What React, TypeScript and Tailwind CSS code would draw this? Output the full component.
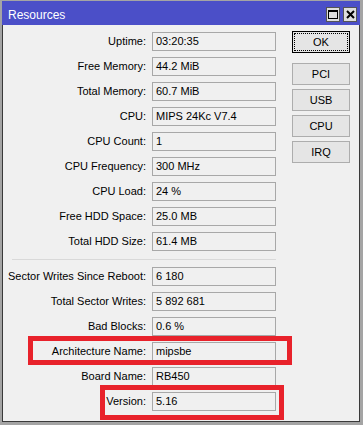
import React from 'react';

const font = { fontFamily: '"Liberation Sans", Arial, sans-serif' };

const GROUP_A: [string, string][] = [
  ['Uptime:', '03:20:35'],
  ['Free Memory:', '44.2 MiB'],
  ['Total Memory:', '60.7 MiB'],
  ['CPU:', 'MIPS 24Kc V7.4'],
  ['CPU Count:', '1'],
  ['CPU Frequency:', '300 MHz'],
  ['CPU Load:', '24 %'],
  ['Free HDD Space:', '25.0 MB'],
  ['Total HDD Size:', '61.4 MB'],
];

const GROUP_B: [string, string][] = [
  ['Sector Writes Since Reboot:', '6 180'],
  ['Total Sector Writes:', '5 892 681'],
  ['Bad Blocks:', '0.6 %'],
  ['Architecture Name:', 'mipsbe'],
  ['Board Name:', 'RB450'],
  ['Version:', '5.16'],
];

const Row: React.FC<{ label: string; value: string }> = ({ label, value }) => (
  <div className="flex h-[19px] items-center gap-[6px]">
    <span className="w-[143px] text-right text-[11px] leading-none text-black">{label}</span>
    <div className="flex h-[19px] w-[124px] items-center border border-[#a8a8a8] px-[3px] text-[11px] leading-none text-black">
      {value}
    </div>
  </div>
);

const SideButton: React.FC<{ label: string }> = ({ label }) => (
  <button className="flex h-[22px] w-[58px] items-center justify-center border border-[#adadad] bg-[#e5e5e5] text-[11px] leading-none text-black">
    {label}
  </button>
);

export default function App() {
  return (
    <div
      className="relative flex h-[425px] w-[363px] flex-col bg-[#a4a4a4] pt-[1px] pr-[3px] pb-[3px] pl-[2px]"
      style={font}
    >
      {/* Title bar */}
      <div className="flex h-[24px] items-center justify-between bg-[#4b4fc8] pl-[6px] pr-[3px]">
        <span className="pt-[3px] text-[12px] leading-none text-white">Resources</span>
        <div className="flex gap-[3px] pt-[2px]">
          <div className="flex h-[15px] w-[14px] items-center justify-center border border-[#555] bg-[#dedede]">
            <svg width="10" height="9" viewBox="0 0 10 9">
              <rect x="0.5" y="0.5" width="9" height="8" fill="none" stroke="#000" />
              <rect x="0" y="0" width="10" height="2" fill="#000" />
            </svg>
          </div>
          <div className="flex h-[15px] w-[14px] items-center justify-center border border-[#555] bg-[#dedede]">
            <svg width="9" height="9" viewBox="0 0 9 9">
              <path d="M1 1 L8 8 M8 1 L1 8" stroke="#000" strokeWidth="2" />
            </svg>
          </div>
        </div>
      </div>

      {/* Body */}
      <div className="flex flex-1 gap-[16px] border-x border-b border-[#3a3a3a] bg-[#f0f0f0]">
        <div className="flex flex-col pt-[7px]">
          <div className="flex flex-col gap-[6px]">
            {GROUP_A.map(([l, v]) => (
              <Row key={l} label={l} value={v} />
            ))}
          </div>
          <div className="mt-[8px] mb-[7px] ml-[9px] border-t border-[#d9d9d9]" />
          <div className="flex flex-col gap-[6px]">
            {GROUP_B.map(([l, v]) => (
              <Row key={l} label={l} value={v} />
            ))}
          </div>
        </div>

        <div className="flex flex-col pt-[6px]">
          <button className="flex h-[22px] w-[58px] items-center justify-center border border-black bg-[#e5e5e5] p-[1px]">
            <span className="flex h-full w-full items-center justify-center border border-dotted border-black text-[11px] leading-none text-black">
              OK
            </span>
          </button>
          <div className="mt-[10px] flex flex-col gap-[4px]">
            <SideButton label="PCI" />
            <SideButton label="USB" />
            <SideButton label="CPU" />
            <SideButton label="IRQ" />
          </div>
        </div>
      </div>

      {/* Annotation boxes */}
      <div className="pointer-events-none absolute left-[28px] top-[336px] h-[29px] w-[264px] border-[5px] border-[#e8222b]" />
      <div className="pointer-events-none absolute left-[100px] top-[385px] h-[35px] w-[184px] border-[5px] border-[#e8222b]" />
    </div>
  );
}
